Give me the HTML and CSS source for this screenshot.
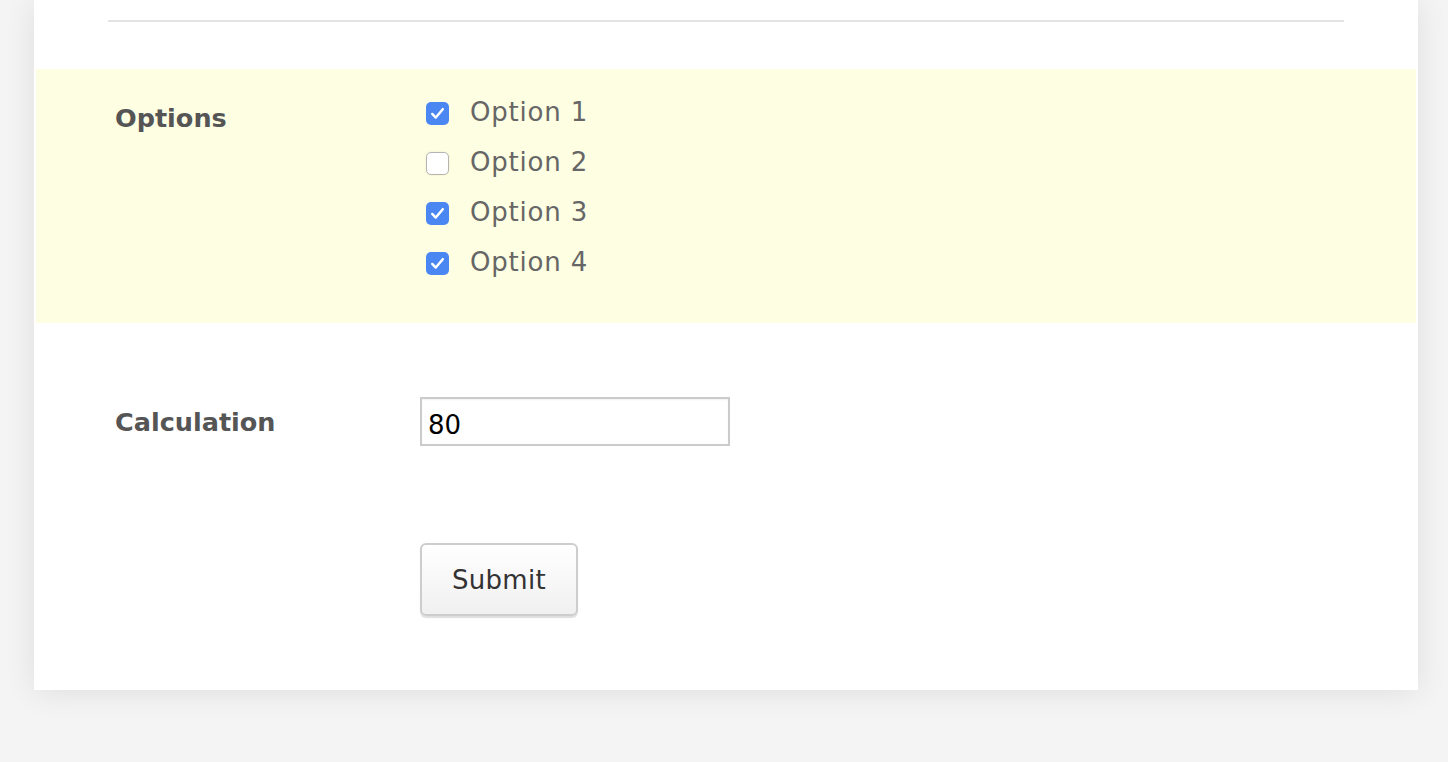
FILE: index.html
```html
<!DOCTYPE html>
<html>
<head>
<meta charset="utf-8">
<link rel="stylesheet" href="styles.css">
</head>
<body>
<div class="card">
  <div class="top"><div class="rule"></div></div>
  <div class="row options-row">
    <div class="label label-options">Options</div>
    <div class="opts">
      <label class="opt"><span class="cb checked"><svg viewBox="0 0 24 24" width="23" height="23"><path d="M6.5 12.5 L10.2 16.2 L17.5 7.5" fill="none" stroke="#fff" stroke-width="2.6" stroke-linecap="round" stroke-linejoin="round"/></svg></span><span class="opt-text">Option 1</span></label>
      <label class="opt"><span class="cb"></span><span class="opt-text">Option 2</span></label>
      <label class="opt"><span class="cb checked"><svg viewBox="0 0 24 24" width="23" height="23"><path d="M6.5 12.5 L10.2 16.2 L17.5 7.5" fill="none" stroke="#fff" stroke-width="2.6" stroke-linecap="round" stroke-linejoin="round"/></svg></span><span class="opt-text">Option 3</span></label>
      <label class="opt"><span class="cb checked"><svg viewBox="0 0 24 24" width="23" height="23"><path d="M6.5 12.5 L10.2 16.2 L17.5 7.5" fill="none" stroke="#fff" stroke-width="2.6" stroke-linecap="round" stroke-linejoin="round"/></svg></span><span class="opt-text">Option 4</span></label>
    </div>
  </div>
  <div class="row calc-row">
    <div class="label">Calculation</div>
    <div><input class="field" type="text" value="80"></div>
  </div>
  <div class="row submit-row">
    <div></div>
    <div><button class="btn" type="button">Submit</button></div>
  </div>
</div>
</body>
</html>
```
FILE: styles.css
```css
html, body {
  margin: 0;
  padding: 0;
  background: #f4f4f4;
  height: 100%;
}
body {
  font-family: "DejaVu Sans", "Liberation Sans", sans-serif;
  overflow: hidden;
}
.card {
  margin-left: 34px;
  width: 1384px;
  background: #fff;
  box-sizing: border-box;
  padding: 0 2px 74px;
  box-shadow: 0 2px 30px rgba(0, 0, 0, 0.09);
}
.top {
  padding: 20px 72px 0;
}
.rule {
  height: 0;
  border-top: 2px solid #e3e3e3;
}
.row {
  display: grid;
  grid-template-columns: 305px 1fr;
  padding-left: 79px;
}
.label {
  font-weight: bold;
  font-size: 25.5px;
  color: #555;
}
.options-row {
  margin-top: 47px;
  background: #fefee3;
  padding-top: 18px;
  padding-bottom: 36px;
}
.label-options {
  line-height: 50px;
  padding-top: 6px;
}
.opts {
  display: flex;
  flex-direction: column;
}
.opt {
  display: flex;
  align-items: center;
  height: 50px;
}
.cb {
  width: 23px;
  height: 23px;
  box-sizing: border-box;
  border-radius: 5px;
  margin-left: 6px;
  margin-top: 2px;
  background: #fff;
  border: 1px solid #b4b4b4;
  box-shadow: 0 0 2px rgba(200, 180, 100, 0.25);
  display: flex;
}
.cb.checked {
  background: #4a87f3;
  border: none;
  box-shadow: none;
}
.cb svg {
  display: block;
}
.opt-text {
  margin-left: 21px;
  font-size: 26px;
  letter-spacing: 0.8px;
  color: #666;
}
.calc-row {
  padding-top: 74px;
  align-items: center;
}
.field {
  display: block;
  width: 310px;
  height: 49px;
  box-sizing: border-box;
  border: 2px solid #cbcbcb;
  box-shadow: inset 0 1px 2px rgba(0, 0, 0, 0.06);
  font-family: "DejaVu Sans", "Liberation Sans", sans-serif;
  font-size: 26px;
  color: #000;
  padding: 6px 6px 0;
  margin: 0;
  outline: none;
}
.submit-row {
  padding-top: 97px;
}
.btn {
  display: block;
  width: 158px;
  height: 73px;
  margin: 0;
  box-sizing: border-box;
  border: 2px solid #cdcdcd;
  border-radius: 6px;
  background: linear-gradient(#ffffff, #f0f0f0);
  box-shadow: 0 2px 1px rgba(0, 0, 0, 0.13);
  font-family: "DejaVu Sans", "Liberation Sans", sans-serif;
  font-size: 26px;
  letter-spacing: 0.3px;
  color: #333;
  padding: 1px 0 0;
}
```
